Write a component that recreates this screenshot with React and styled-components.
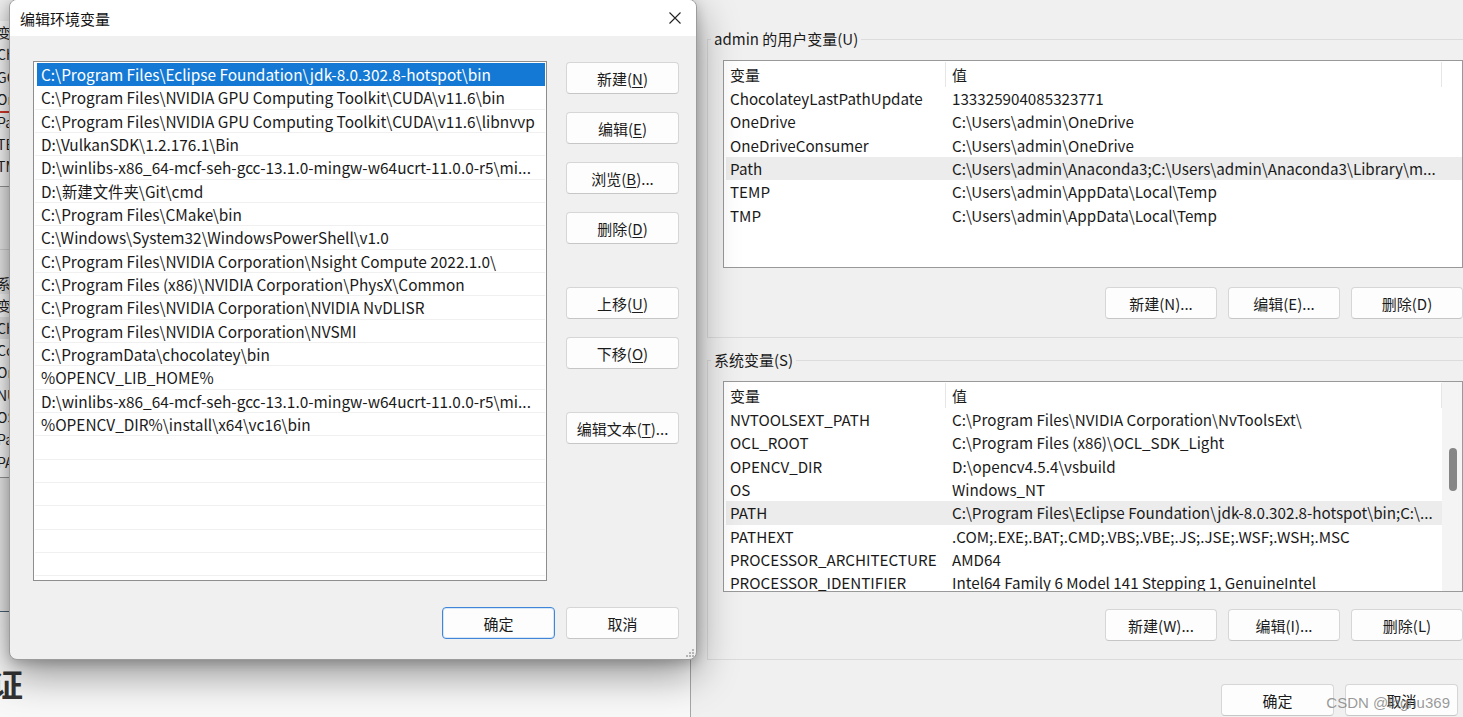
import React from "react";
import styled, { createGlobalStyle, css } from "styled-components";

const GlobalStyle = createGlobalStyle`
  html, body { margin: 0; padding: 0; }
  body {
    font-family: "Noto Sans CJK SC", "Noto Sans", sans-serif;
    background: #f8f8f8;
    overflow: hidden;
  }
`;

const Desktop = styled.div`
  position: relative;
  width: 1463px;
  height: 717px;
  overflow: hidden;
  background: #f8f8f8;
  color: #1a1a1a;
`;

/* page text peeking out under the dialog */
const PageHeading = styled.div`
  position: absolute;
  left: -9px;
  top: 660px;
  font-size: 32px;
  font-weight: 700;
  color: #333;
`;

/* ---------- window cut off at the left edge ---------- */
const StripWindow = styled.div`
  position: absolute;
  left: -60px;
  top: 0;
  width: 72px;
  height: 612px;
  background: #f0f0f0;
  border-bottom: 1px solid #4d6478;
  display: flex;
  flex-direction: column;
  padding-top: 21px;
  box-sizing: border-box;
`;

const StripList = styled.div`
  background: #fff;
  border-bottom: 1px solid #9a9a9a;
  padding-bottom: ${p => p.$pad || 0}px;
`;

const StripRow = styled.div`
  height: 22.4px;
  line-height: 22px;
  padding-left: 57px;
  font-size: 14px;
  white-space: nowrap;
  overflow: hidden;
  color: #222;
  ${p => p.$hl && css`background: #e8e8e8;`}
  ${p => p.$mark && css`box-shadow: inset 0 2px 0 #d8392b;`}
`;

const StripGap = styled.div`
  height: ${p => p.$h}px;
  border-bottom: ${p => (p.$line ? "1px solid #d6d6d6" : "none")};
`;

/* ---------- background window: environment variables ---------- */
const EnvWindow = styled.div`
  position: absolute;
  left: 690px;
  top: 0;
  width: 810px;
  height: 760px;
  box-sizing: border-box;
  background: #f0f0f0;
  border-left: 1px solid #a6a6a6;
  padding: 39px 0 0 16px;
  display: flex;
  flex-direction: column;
`;

const Group = styled.section`
  position: relative;
  width: 773px;
  box-sizing: border-box;
  border: 1px solid #dcdcdc;
  padding: 20px 16px 18px 15px;
  margin-top: ${p => p.$mt || 0}px;
`;

const GroupLabel = styled.span`
  position: absolute;
  top: -11px;
  left: 3px;
  padding: 0 3px;
  background: #f0f0f0;
  font-size: 15px;
  line-height: 20px;
  color: #1a1a1a;
`;

const VarList = styled.div`
  height: ${p => p.$h}px;
  box-sizing: border-box;
  background: #fff;
  border: 1px solid #999;
  display: flex;
  overflow: hidden;
`;

const VarBody = styled.div`
  flex: 1;
  padding-top: 1px;
`;

const VarHeader = styled.div`
  display: grid;
  grid-template-columns: 222px 496px 1fr;
  height: 25px;
  font-size: 15px;
  line-height: 25px;
`;

const HeadCell = styled.div`
  padding-left: ${p => p.$pl}px;
  border-right: ${p => (p.$last ? "none" : "1px solid #e6e6e6")};
`;

const VarRow = styled.div`
  display: grid;
  grid-template-columns: 220px 496px;
  margin-left: 2px;
  height: 23.33px;
  line-height: 23px;
  font-size: 15.2px;
  white-space: nowrap;
  background: ${p => (p.$hl ? "#ececec" : "transparent")};
`;

const VarCell = styled.div`
  padding-left: ${p => p.$pl}px;
  overflow: hidden;
`;

const ScrollTrack = styled.div`
  width: 20px;
  background: #f4f4f4;
  display: flex;
  justify-content: center;
`;

const ScrollThumb = styled.div`
  width: 8px;
  height: 43px;
  margin-top: 66px;
  margin-left: 1px;
  border-radius: 4px;
  background: #868686;
`;

const ButtonRow = styled.div`
  display: flex;
  justify-content: flex-end;
  gap: ${p => p.$gap || 11}px;
  margin-top: ${p => p.$mt || 0}px;
`;

const Btn = styled.button`
  width: ${p => p.$w || 113}px;
  height: 32px;
  box-sizing: border-box;
  padding: 0;
  background: #fdfdfd;
  border: 1px solid #d6d6d6;
  border-bottom-color: #c6c6c6;
  border-radius: 4px;
  font-family: inherit;
  font-size: 15px;
  color: #1b1b1b;
  ${p =>
    p.$primary &&
    css`
      border: 1px solid #3f86d8;
      box-shadow: inset 0 0 0 1px #d6e6f7;
    `}
`;

const Mn = styled.span`
  text-decoration: underline;
  text-underline-offset: 2px;
`;

const EnvFooter = styled.div`
  width: 773px;
  display: flex;
  justify-content: flex-end;
  gap: 11px;
  padding: 24px 22px 0 0;
  box-sizing: border-box;
`;

const Watermark = styled.div`
  position: absolute;
  right: 13px;
  bottom: 6px;
  font-family: "Liberation Sans", Arial, sans-serif;
  font-size: 15px;
  color: rgba(120, 120, 120, 0.75);
  pointer-events: none;
`;

/* ---------- front dialog: edit environment variable ---------- */
const Dialog = styled.div`
  position: absolute;
  left: 9px;
  top: -1px;
  width: 688px;
  height: 661px;
  box-sizing: border-box;
  background: #f0f0f0;
  border: 1px solid #9c9c9c;
  border-radius: 8px;
  overflow: hidden;
  box-shadow: 0 14px 40px rgba(0, 0, 0, 0.42), 0 3px 12px rgba(0, 0, 0, 0.2);
  display: flex;
  flex-direction: column;
`;

const TitleBar = styled.div`
  height: 36px;
  flex-shrink: 0;
  background: #fff;
  display: flex;
  align-items: center;
  justify-content: space-between;
  padding: 0 15px 0 10px;
`;

const Title = styled.span`
  font-size: 15px;
  color: #111;
`;

const CloseBtn = styled.span`
  width: 12px;
  height: 12px;
  display: flex;
`;

const DialogMain = styled.div`
  display: flex;
  padding: 25px 17px 0 23px;
`;

const PathList = styled.div`
  width: 514px;
  height: 520px;
  box-sizing: border-box;
  background: #fff;
  border: 1px solid #8e8e8e;
  padding: 1px;
  overflow: hidden;
`;

const PathRow = styled.div`
  height: 23.33px;
  box-sizing: border-box;
  border-bottom: 1px solid #f0f0f0;
  padding-left: 6px;
  font-size: 15.4px;
  line-height: 22px;
  white-space: nowrap;
  overflow: hidden;
  ${p =>
    p.$sel &&
    css`
      background: #1479d4;
      color: #fff;
      margin-left: 2px;
      padding-left: 4px;
      border-bottom-color: #1479d4;
    `}
`;

const SideButtons = styled.div`
  display: flex;
  flex-direction: column;
  margin: 1px 0 0 19px;
  gap: 18px;
`;

const SideGap = styled.div`
  height: 7px;
`;

const DialogFooter = styled.div`
  display: flex;
  justify-content: flex-end;
  gap: 11px;
  padding: 26px 17px 0 0;
`;

const Grip = styled.svg`
  position: absolute;
  right: 2px;
  bottom: 2px;
`;

const paths = [
  "C:\\Program Files\\Eclipse Foundation\\jdk-8.0.302.8-hotspot\\bin",
  "C:\\Program Files\\NVIDIA GPU Computing Toolkit\\CUDA\\v11.6\\bin",
  "C:\\Program Files\\NVIDIA GPU Computing Toolkit\\CUDA\\v11.6\\libnvvp",
  "D:\\VulkanSDK\\1.2.176.1\\Bin",
  "D:\\winlibs-x86_64-mcf-seh-gcc-13.1.0-mingw-w64ucrt-11.0.0-r5\\mi...",
  "D:\\新建文件夹\\Git\\cmd",
  "C:\\Program Files\\CMake\\bin",
  "C:\\Windows\\System32\\WindowsPowerShell\\v1.0",
  "C:\\Program Files\\NVIDIA Corporation\\Nsight Compute 2022.1.0\\",
  "C:\\Program Files (x86)\\NVIDIA Corporation\\PhysX\\Common",
  "C:\\Program Files\\NVIDIA Corporation\\NVIDIA NvDLISR",
  "C:\\Program Files\\NVIDIA Corporation\\NVSMI",
  "C:\\ProgramData\\chocolatey\\bin",
  "%OPENCV_LIB_HOME%",
  "D:\\winlibs-x86_64-mcf-seh-gcc-13.1.0-mingw-w64ucrt-11.0.0-r5\\mi...",
  "%OPENCV_DIR%\\install\\x64\\vc16\\bin",
  "", "", "", "", "", "", ""
];

const userVars = [
  ["ChocolateyLastPathUpdate", "133325904085323771"],
  ["OneDrive", "C:\\Users\\admin\\OneDrive"],
  ["OneDriveConsumer", "C:\\Users\\admin\\OneDrive"],
  ["Path", "C:\\Users\\admin\\Anaconda3;C:\\Users\\admin\\Anaconda3\\Library\\m...", true],
  ["TEMP", "C:\\Users\\admin\\AppData\\Local\\Temp"],
  ["TMP", "C:\\Users\\admin\\AppData\\Local\\Temp"],
];

const sysVars = [
  ["NVTOOLSEXT_PATH", "C:\\Program Files\\NVIDIA Corporation\\NvToolsExt\\"],
  ["OCL_ROOT", "C:\\Program Files (x86)\\OCL_SDK_Light"],
  ["OPENCV_DIR", "D:\\opencv4.5.4\\vsbuild"],
  ["OS", "Windows_NT"],
  ["PATH", "C:\\Program Files\\Eclipse Foundation\\jdk-8.0.302.8-hotspot\\bin;C:\\...", true],
  ["PATHEXT", ".COM;.EXE;.BAT;.CMD;.VBS;.VBE;.JS;.JSE;.WSF;.WSH;.MSC"],
  ["PROCESSOR_ARCHITECTURE", "AMD64"],
  ["PROCESSOR_IDENTIFIER", "Intel64 Family 6 Model 141 Stepping 1, GenuineIntel"],
];

const VarTable = ({ rows, height, scroll }) => (
  <VarList $h={height}>
    <VarBody>
      <VarHeader>
        <HeadCell $pl={6}>变量</HeadCell>
        <HeadCell $pl={6}>值</HeadCell>
        <HeadCell $last />
      </VarHeader>
      {rows.map(([name, value, hl]) => (
        <VarRow key={name} $hl={hl}>
          <VarCell $pl={4}>{name}</VarCell>
          <VarCell $pl={6}>{value}</VarCell>
        </VarRow>
      ))}
    </VarBody>
    {scroll && (
      <ScrollTrack>
        <ScrollThumb />
      </ScrollTrack>
    )}
  </VarList>
);

const App = () => {
  return (
    <Desktop>
      <GlobalStyle />
      <PageHeading>证</PageHeading>

      <StripWindow>
        <StripList $pad={8}>
          <StripRow>变量</StripRow>
          <StripRow>Ch</StripRow>
          <StripRow>GO</StripRow>
          <StripRow>On</StripRow>
          <StripRow $mark>Pa</StripRow>
          <StripRow>TE</StripRow>
          <StripRow>TM</StripRow>
        </StripList>
        <StripGap $h={62} $line />
        <StripGap $h={22} />
        <StripRow>系统</StripRow>
        <StripList $pad={4}>
          <StripRow>变量</StripRow>
          <StripRow $hl>Ch</StripRow>
          <StripRow>Co</StripRow>
          <StripRow>On</StripRow>
          <StripRow>NU</StripRow>
          <StripRow>OS</StripRow>
          <StripRow>Pa</StripRow>
          <StripRow>PA</StripRow>
        </StripList>
      </StripWindow>

      <EnvWindow>
        <Group>
          <GroupLabel>admin 的用户变量(U)</GroupLabel>
          <VarTable rows={userVars} height={208} />
          <ButtonRow $mt={19}>
            <Btn $w={112}>新建(N)...</Btn>
            <Btn $w={112}>编辑(E)...</Btn>
            <Btn $w={112}>删除(D)</Btn>
          </ButtonRow>
        </Group>
        <Group $mt={22}>
          <GroupLabel>系统变量(S)</GroupLabel>
          <VarTable rows={sysVars} height={211} scroll />
          <ButtonRow $mt={17}>
            <Btn $w={112}>新建(W)...</Btn>
            <Btn $w={112}>编辑(I)...</Btn>
            <Btn $w={112}>删除(L)</Btn>
          </ButtonRow>
        </Group>
        <EnvFooter>
          <Btn>确定</Btn>
          <Btn>取消</Btn>
        </EnvFooter>
      </EnvWindow>

      <Dialog>
        <TitleBar>
          <Title>编辑环境变量</Title>
          <CloseBtn>
            <svg width="12" height="12" viewBox="0 0 12 12">
              <path d="M0.5 0.5 L11.5 11.5 M11.5 0.5 L0.5 11.5" stroke="#222" strokeWidth="1.1" fill="none" />
            </svg>
          </CloseBtn>
        </TitleBar>
        <DialogMain>
          <PathList>
            {paths.map((p, i) => (
              <PathRow key={i} $sel={i === 0}>{p}</PathRow>
            ))}
          </PathList>
          <SideButtons>
            <Btn>新建(<Mn>N</Mn>)</Btn>
            <Btn>编辑(<Mn>E</Mn>)</Btn>
            <Btn>浏览(<Mn>B</Mn>)...</Btn>
            <Btn>删除(<Mn>D</Mn>)</Btn>
            <SideGap />
            <Btn>上移(<Mn>U</Mn>)</Btn>
            <Btn>下移(<Mn>O</Mn>)</Btn>
            <SideGap />
            <Btn>编辑文本(<Mn>T</Mn>)...</Btn>
          </SideButtons>
        </DialogMain>
        <DialogFooter>
          <Btn $primary>确定</Btn>
          <Btn>取消</Btn>
        </DialogFooter>
        <Grip width="10" height="10" viewBox="0 0 10 10">
          <g fill="#b5b5b5">
            <rect x="8" y="2" width="2" height="2" />
            <rect x="5" y="5" width="2" height="2" />
            <rect x="8" y="5" width="2" height="2" />
            <rect x="2" y="8" width="2" height="2" />
            <rect x="5" y="8" width="2" height="2" />
            <rect x="8" y="8" width="2" height="2" />
          </g>
        </Grip>
      </Dialog>

      <Watermark>CSDN @lhgnu369</Watermark>
    </Desktop>
  );
};

export default App;
